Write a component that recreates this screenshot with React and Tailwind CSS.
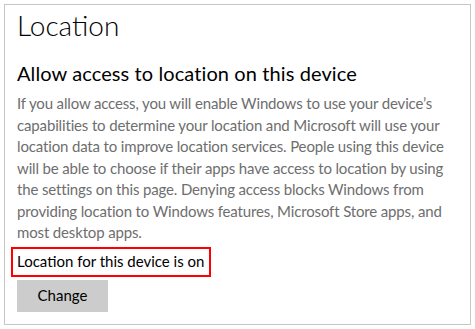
export default function App() {
  const lines = [
    "If you allow access, you will enable Windows to use your device\u2019s",
    "capabilities to determine your location and Microsoft will use your",
    "location data to improve location services. People using this device",
    "will be able to choose if their apps have access to location by using",
    "the settings on this page. Denying access blocks Windows from",
    "providing location to Windows features, Microsoft Store apps, and",
    "most desktop apps.",
  ];
  return (
    <div
      className="w-[475px] h-[329px] bg-white p-[4px]"
      style={{ fontFamily: 'Lato, "Open Sans", sans-serif' }}
    >
      <div className="h-full border border-[#c6c6c6] pl-[12px] pt-[2px] flex flex-col items-start">
        <h1 className="text-[28px] leading-[36px] font-light text-black">Location</h1>
        <h2 className="mt-[17px] text-[20px] leading-[26px] text-black tracking-[0.1px]">
          Allow access to location on this device
        </h2>
        <p className="mt-[7px] text-[15px] leading-[21.5px] text-[#6e6e6e] whitespace-nowrap tracking-[-0.15px]">
          {lines.map((l, i) => (
            <span key={i} className="block">
              {l}
            </span>
          ))}
        </p>
        <div className="mt-[3px] -ml-[6px] border-2 border-[#ff0000] pl-[4px] pr-[5px] h-[30px] flex items-center text-[15px] text-black">
          Location for this device is on
        </div>
        <button className="mt-[3px] w-[91px] h-[32px] bg-[#cccccc] text-[15px] text-black flex items-center justify-center">
          Change
        </button>
      </div>
    </div>
  );
}
